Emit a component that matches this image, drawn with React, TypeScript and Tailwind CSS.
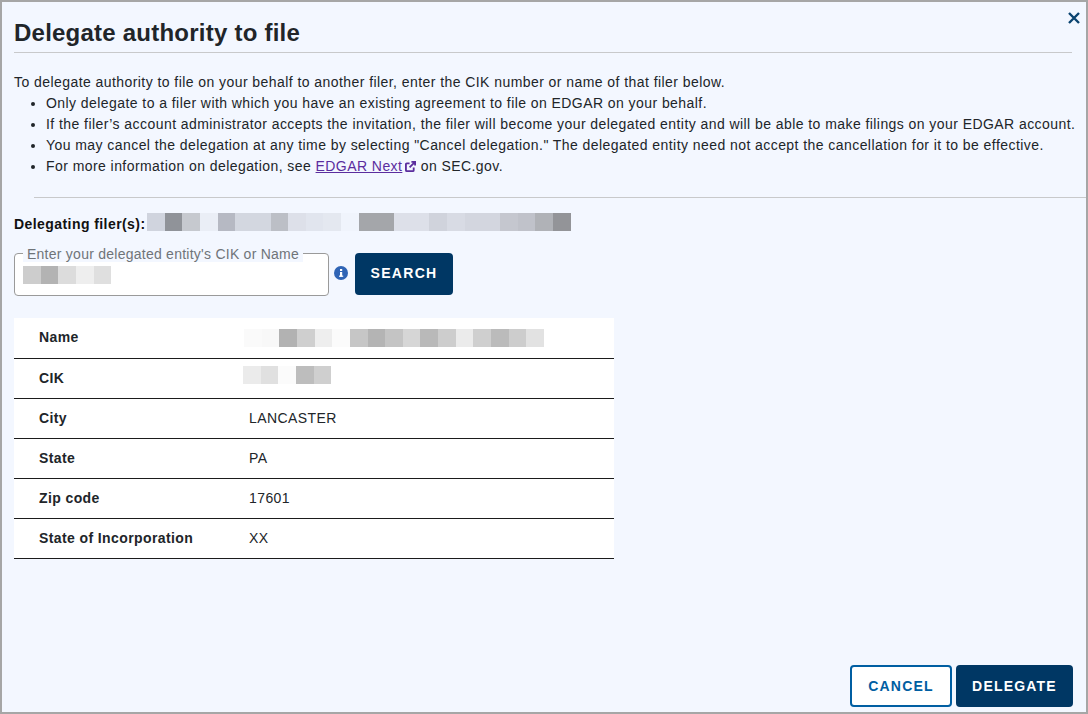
import React from "react";

const filerBlocks: [string, string][] = [
  ["w-[18px]", "bg-[#d0d4de]"], ["w-[17px]", "bg-[#909399]"], ["w-[18px]", "bg-[#c6c9cf]"], ["w-[18px]", "bg-[#eaeef6]"],
  ["w-[17px]", "bg-[#b6b9c3]"], ["w-[18px]", "bg-[#d3d7e0]"], ["w-[18px]", "bg-[#d3d7e0]"], ["w-[17px]", "bg-[#bcbfc6]"],
  ["w-[18px]", "bg-[#dde0e9]"], ["w-[17px]", "bg-[#e1e5ee]"], ["w-[18px]", "bg-[#e4e8f0]"], ["w-[18px]", "bg-[#f0f4fc]"],
  ["w-[35px]", "bg-[#a4a6aa]"], ["w-[35px]", "bg-[#dde0e9]"], ["w-[18px]", "bg-[#d0d3dc]"], ["w-[18px]", "bg-[#d8dbe4]"],
  ["w-[17px]", "bg-[#d3d6df]"], ["w-[18px]", "bg-[#d3d6df]"], ["w-[18px]", "bg-[#c5c7cf]"], ["w-[17px]", "bg-[#c0c2ca]"],
  ["w-[18px]", "bg-[#b0b2b7]"], ["w-[18px]", "bg-[#939498]"],
];
const inputBlocks: [string, string][] = [
  ["w-[18px]", "bg-[#cdcdcd]"], ["w-[17px]", "bg-[#b3b3b3]"], ["w-[18px]", "bg-[#dcdcdc]"], ["w-[18px]", "bg-[#eeeeee]"], ["w-[17px]", "bg-[#dfdfdf]"],
];
const nameBlocks: [string, string][] = [
  ["w-[18px]", "bg-[#fafafa]"], ["w-[17px]", "bg-[#f8f8f8]"], ["w-[18px]", "bg-[#b2b2b2]"], ["w-[18px]", "bg-[#cfcfcf]"],
  ["w-[17px]", "bg-[#eeeeee]"], ["w-[18px]", "bg-[#fbfbfb]"], ["w-[18px]", "bg-[#c6c6c6]"], ["w-[17px]", "bg-[#b4b4b4]"],
  ["w-[18px]", "bg-[#c4c4c4]"], ["w-[17px]", "bg-[#d6d6d6]"], ["w-[18px]", "bg-[#b9b9b9]"], ["w-[18px]", "bg-[#cdcdcd]"],
  ["w-[17px]", "bg-[#ebebeb]"], ["w-[18px]", "bg-[#cfcfcf]"], ["w-[18px]", "bg-[#bbbbbb]"], ["w-[17px]", "bg-[#cdcdcd]"],
  ["w-[18px]", "bg-[#e2e2e2]"],
];
const cikBlocks: [string, string][] = [
  ["w-[18px]", "bg-[#ebebeb]"], ["w-[17px]", "bg-[#e0e0e0]"], ["w-[18px]", "bg-[#fbfbfb]"], ["w-[18px]", "bg-[#bdbdbd]"], ["w-[17px]", "bg-[#cfcfcf]"],
];

function Mosaic({ blocks }: { blocks: [string, string][] }) {
  return (
    <div className="flex h-[18px]">
      {blocks.map(([w, c], i) => (
        <div key={i} className={`${w} ${c} h-full`} />
      ))}
    </div>
  );
}

function Row({ label, children, first }: { label: string; children: React.ReactNode; first?: boolean }) {
  return (
    <div className={`flex items-center border-b border-[#1b1b1b] ${first ? "h-[41px] pb-[1px]" : "h-[40px]"}`}>
      <div className="w-[234px] pl-[25px] text-[14px] font-bold tracking-[0.4px] text-[#212529]">{label}</div>
      <div className="pl-[1px] text-[14px] tracking-[0.42px] text-[#212529]">{children}</div>
    </div>
  );
}

export default function App() {
  return (
    <div className="relative flex h-[714px] w-[1088px] flex-col overflow-hidden border-2 border-[#a6a6a6] bg-[#f3f7ff] font-['Liberation_Sans',Arial,sans-serif]">
      <button className="absolute right-[5px] top-[9px] text-[#0b4470]" aria-label="Close">
        <svg width="14" height="14" viewBox="0 0 14 14" fill="none" stroke="currentColor" strokeWidth="2.4">
          <path d="M2 2 L12 12 M12 2 L2 12" />
        </svg>
      </button>

      <div className="ml-[12px] mr-[14px] mt-[15px] h-[36px] border-b border-[#c8c9cb]">
        <h1 className="text-[24px] font-bold leading-[32px] tracking-[0.23px] text-[#212529]">Delegate authority to file</h1>
      </div>

      <div className="ml-[12px] mt-[19px] text-[14px] leading-[21px] tracking-[0.435px] text-[#212529]">
        <p>To delegate authority to file on your behalf to another filer, enter the CIK number or name of that filer below.</p>
        <ul className="list-disc pl-[32px]">
          <li>Only delegate to a filer with which you have an existing agreement to file on EDGAR on your behalf.</li>
          <li>If the filer’s account administrator accepts the invitation, the filer will become your delegated entity and will be able to make filings on your EDGAR account.</li>
          <li>You may cancel the delegation at any time by selecting "Cancel delegation." The delegated entity need not accept the cancellation for it to be effective.</li>
          <li>
            For more information on delegation, see{" "}
            <a className="text-[#5b2d9e] underline" href="#">
              EDGAR Next
              <svg className="ml-[3px] inline-block align-[-1px]" width="11" height="11" viewBox="0 0 12 12" fill="none" stroke="currentColor" strokeWidth="2">
                <path d="M9.5 7v3a1 1 0 0 1-1 1H2a1 1 0 0 1-1-1V3.5a1 1 0 0 1 1-1h3" />
                <path d="M7 1h4v4M11 1L5 7" />
              </svg>
            </a>{" "}
            on SEC.gov.
          </li>
        </ul>
      </div>

      <div className="ml-[32px] mt-[20px] h-px bg-[#c8c9cb]" />

      <div className="ml-[12px] mt-[14px] flex items-center">
        <span className="mr-[1px] mt-[2px] text-[14px] font-bold tracking-[0.43px] text-[#111111]">Delegating filer(s):</span>
        <div className="-mt-[4px]">
          <Mosaic blocks={filerBlocks} />
        </div>
      </div>

      <div className="ml-[12px] mt-[18px] flex items-center">
        <div className="relative h-[43px] w-[315px] rounded-[4px] border border-[#9a9a9a] bg-white pl-[8px] pt-[12px]">
          <span className="absolute left-[8px] top-[-8px] bg-[#f3f7ff] px-[4px] text-[14px] leading-[16px] tracking-[0.25px] text-[#6f7479]">
            Enter your delegated entity's CIK or Name
          </span>
          <Mosaic blocks={inputBlocks} />
        </div>
        <svg className="-mt-[4px] ml-[5px]" width="14" height="14" viewBox="0 0 14 14">
          <circle cx="7" cy="7" r="7" fill="#2f64b5" />
          <rect x="6" y="6" width="2.2" height="4.6" fill="#fff" />
          <rect x="6" y="3" width="2.2" height="2" fill="#fff" />
          <rect x="5" y="9.6" width="4.2" height="1.2" fill="#fff" />
        </svg>
        <button className="-mt-[2px] ml-[7px] h-[42px] w-[98px] rounded-[4px] bg-[#003764] text-[14px] font-bold tracking-[1.3px] text-white">SEARCH</button>
      </div>

      <div className="ml-[12px] mt-[22px] w-[600px] bg-white">
        <Row label="Name" first><div className="-ml-[5px]"><Mosaic blocks={nameBlocks} /></div></Row>
        <Row label="CIK"><div className="-ml-[6px] -mt-[8px]"><Mosaic blocks={cikBlocks} /></div></Row>
        <Row label="City">LANCASTER</Row>
        <Row label="State">PA</Row>
        <Row label="Zip code">17601</Row>
        <Row label="State of Incorporation">XX</Row>
      </div>

      <div className="mb-[5px] mr-[13px] mt-auto flex justify-end gap-[4px]">
        <button className="h-[42px] w-[102px] rounded-[4px] border-2 border-[#005ea2] bg-white text-[14px] font-bold tracking-[1.2px] text-[#005ea2]">CANCEL</button>
        <button className="h-[42px] w-[117px] rounded-[4px] bg-[#003764] text-[14px] font-bold tracking-[1.2px] text-white">DELEGATE</button>
      </div>
    </div>
  );
}
